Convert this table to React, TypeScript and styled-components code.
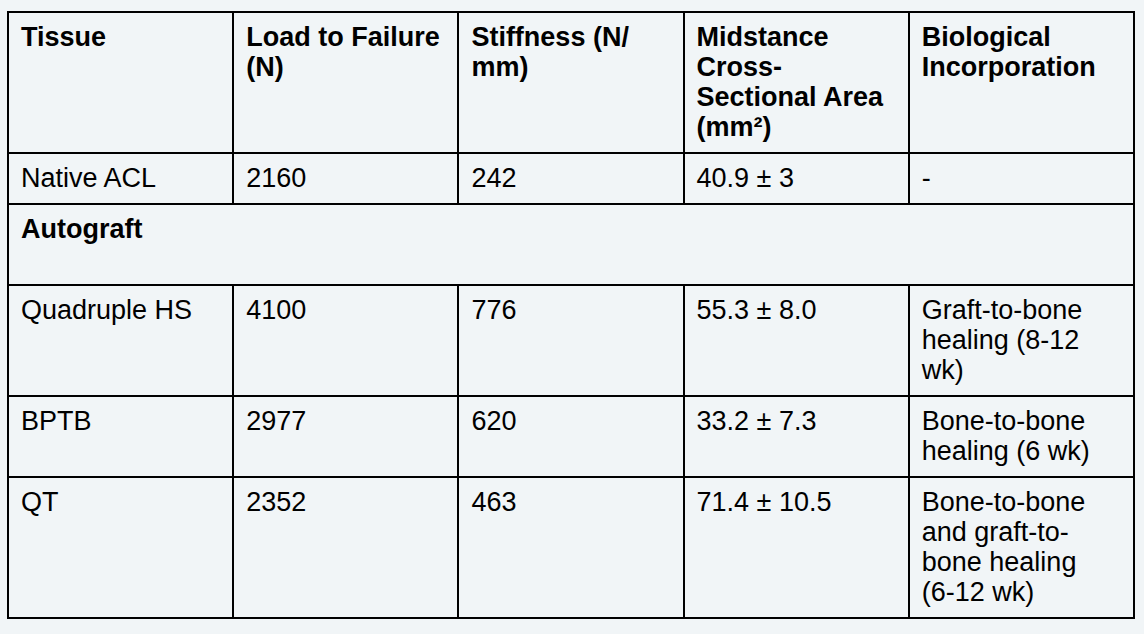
import React from 'react';
import styled, { createGlobalStyle } from 'styled-components';

const GlobalStyle = createGlobalStyle`
    html, body {
        margin: 0;
        padding: 0;
        background: #f1f5f7;
    }
`;

/* Page wrapper */
const Page = styled.div`
    padding: 11px 9px 0 7px;
    font-family: "Liberation Sans", Arial, Helvetica, sans-serif;
    color: #000;
`;

const Table = styled.table`
    width: 1128px;
    border-collapse: collapse;
    table-layout: fixed;
    font-size: 27px;
    line-height: 30px;
`;

// Cell: bold for header / section rows
const Cell = styled.td<{ $bold?: boolean }>`
    border: 2px solid #000;
    padding: 9px 12px 10px 12px;
    vertical-align: top;
    text-align: left;
    font-weight: ${p => (p.$bold ? 700 : 400)};
`;

const HeadCell = styled(Cell).attrs({ as: 'th' })``;

// keeps a short range like "(6-12 wk)" on one line
const NoWrap = styled.span`
    white-space: nowrap;
`;

const headers = [
    'Load to Failure (N)',
    'Stiffness (N/ mm)',
    'Midstance Cross-Sectional Area (mm²)',
    'Biological Incorporation',
];

type Row = { tissue: string; load: string; stiff: string; area: string; bio: React.ReactNode };

const native: Row = { tissue: 'Native ACL', load: '2160', stiff: '242', area: '40.9 ± 3', bio: '-' };

const autografts: Row[] = [
    { tissue: 'Quadruple HS', load: '4100', stiff: '776', area: '55.3 ± 8.0', bio: 'Graft-to-bone healing (8-12 wk)' },
    { tissue: 'BPTB', load: '2977', stiff: '620', area: '33.2 ± 7.3', bio: 'Bone-to-bone healing (6 wk)' },
    {
        tissue: 'QT',
        load: '2352',
        stiff: '463',
        area: '71.4 ± 10.5',
        bio: (
            <>
                Bone-to-bone and graft-to-bone healing <NoWrap>(6-12 wk)</NoWrap>
            </>
        ),
    },
];

function DataRow({ row }: { row: Row }) {
    return (
        <tr>
            <Cell>{row.tissue}</Cell>
            <Cell>{row.load}</Cell>
            <Cell>{row.stiff}</Cell>
            <Cell>{row.area}</Cell>
            <Cell>{row.bio}</Cell>
        </tr>
    );
}

export default function App() {
    return (
        <Page>
            <GlobalStyle />
            <Table>
                <thead>
                    <tr>
                        <HeadCell $bold>Tissue</HeadCell>
                        {headers.map(h => (
                            <HeadCell $bold key={h}>{h}</HeadCell>
                        ))}
                    </tr>
                </thead>
                <tbody>
                    <DataRow row={native} />
                    <tr>
                        <Cell $bold colSpan={5}>
                            Autograft
                            <br />
                            &nbsp;
                        </Cell>
                    </tr>
                    {autografts.map(r => (
                        <DataRow row={r} key={r.tissue} />
                    ))}
                </tbody>
            </Table>
        </Page>
    );
}
